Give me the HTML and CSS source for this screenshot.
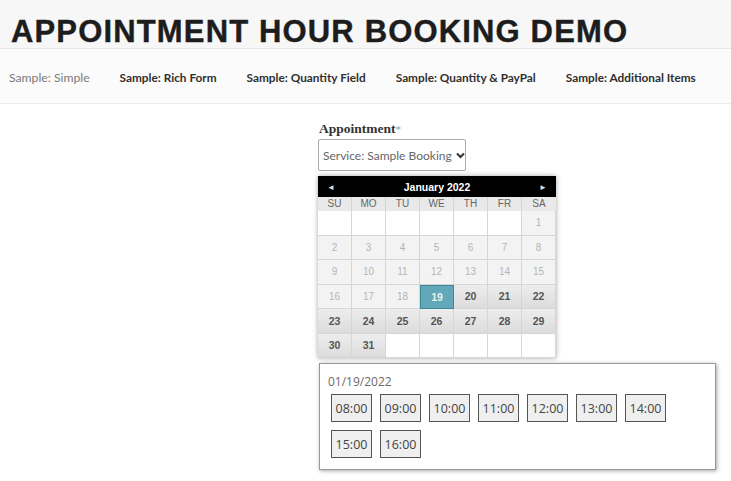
FILE: index.html
```html
<!DOCTYPE html>
<html>
<head>
<meta charset="utf-8">
<link rel="stylesheet" href="styles.css">
</head>
<body>
<header class="site-header">
  <h1 class="site-title">APPOINTMENT HOUR BOOKING DEMO</h1>
</header>
<nav class="main-nav">
  <a class="nav-link current">Sample: Simple</a>
  <a class="nav-link">Sample: Rich Form</a>
  <a class="nav-link">Sample: Quantity Field</a>
  <a class="nav-link">Sample: Quantity &amp; PayPal</a>
  <a class="nav-link">Sample: Additional Items</a>
</nav>
<main class="content">
  <div class="form">
    <label class="field-label">Appointment<span class="req">*</span></label>
    <div class="select">
      <span class="select-text">Service: Sample Booking</span>
      <svg class="chev" width="9" height="7" viewBox="0 0 9 7"><path d="M1 1.5 L4.5 5 L8 1.5" fill="none" stroke="#333" stroke-width="2"/></svg>
    </div>
    <div class="calendar">
      <div class="cal-head">
        <span class="arrow">&#9668;</span>
        <span class="month">January 2022</span>
        <span class="arrow">&#9658;</span>
      </div>
      <div class="cal-grid">
        <div class="dow">SU</div><div class="dow">MO</div><div class="dow">TU</div><div class="dow">WE</div><div class="dow">TH</div><div class="dow">FR</div><div class="dow">SA</div>
        <div class="day empty"></div><div class="day empty"></div><div class="day empty"></div><div class="day empty"></div><div class="day empty"></div><div class="day empty"></div><div class="day off">1</div>
        <div class="day off">2</div><div class="day off">3</div><div class="day off">4</div><div class="day off">5</div><div class="day off">6</div><div class="day off">7</div><div class="day off">8</div>
        <div class="day off">9</div><div class="day off">10</div><div class="day off">11</div><div class="day off">12</div><div class="day off">13</div><div class="day off">14</div><div class="day off">15</div>
        <div class="day off">16</div><div class="day off">17</div><div class="day off">18</div><div class="day sel">19</div><div class="day on">20</div><div class="day on">21</div><div class="day on">22</div>
        <div class="day on">23</div><div class="day on">24</div><div class="day on">25</div><div class="day on">26</div><div class="day on">27</div><div class="day on">28</div><div class="day on">29</div>
        <div class="day on">30</div><div class="day on">31</div><div class="day empty"></div><div class="day empty"></div><div class="day empty"></div><div class="day empty"></div><div class="day empty"></div>
      </div>
    </div>
    <div class="slots">
      <div class="slot-date">01/19/2022</div>
      <div class="slot-list">
        <span class="slot">08:00</span><span class="slot">09:00</span><span class="slot">10:00</span><span class="slot">11:00</span><span class="slot">12:00</span><span class="slot">13:00</span><span class="slot">14:00</span>
        <span class="slot">15:00</span><span class="slot">16:00</span>
      </div>
    </div>
  </div>
</main>
</body>
</html>
```
FILE: styles.css
```css
html, body { margin: 0; padding: 0; }
body {
  background: #ffffff;
  font-family: "Lato", "Liberation Sans", sans-serif;
  color: #333;
  width: 731px;
  height: 481px;
  overflow: hidden;
}
.site-header {
  background: #f7f7f7;
  height: 49px;
  border-bottom: 1px solid #e6e6e6;
  box-sizing: border-box;
  padding-left: 11px;
  overflow: hidden;
}
.site-title {
  margin: 0;
  font-family: "Liberation Sans", Arial, sans-serif;
  font-weight: 900;
  font-size: 31px;
  letter-spacing: 1.15px;
  color: #1d1d1d;
  line-height: 63px;
  -webkit-text-stroke: 0.4px #1d1d1d;
}
.main-nav {
  display: flex;
  align-items: center;
  height: 54px;
  background: #fbfbfb;
  border-bottom: 1px solid #ececec;
  padding-left: 9px;
  gap: 30px;
}
.nav-link {
  font-family: "Lato", sans-serif;
  font-size: 11.8px;
  font-weight: 700;
  color: #2f2f2f;
  padding-top: 2px;
  white-space: nowrap;
}
.nav-link.current { color: #7a7a7a; font-weight: 400; font-size: 12.2px; }
.content {
  padding: 17px 0 0 318px;
}
.form { display: flex; flex-direction: column; align-items: flex-start; }
.field-label {
  font-family: "Liberation Serif", serif;
  font-weight: 700;
  font-size: 13.5px;
  color: #333;
  margin-left: 1px;
  line-height: 16px;
}
.req { color: #7aa; font-weight: 400; font-size: 11px; vertical-align: top; }
.select {
  margin-top: 2px;
  width: 148px;
  height: 32px;
  box-sizing: border-box;
  border: 1px solid #aaa;
  border-radius: 2px;
  display: flex;
  align-items: center;
  padding: 0 4px 0 4px;
  gap: 4px;
}
.select-text { font-size: 12px; color: #666; white-space: nowrap; }
.chev { flex: none; margin-top: 1px; }
.calendar {
  margin-top: 5px;
  width: 238px;
  box-shadow: 0 0 5px rgba(0,0,0,0.35);
  background: #fff;
}
.cal-head {
  height: 21px;
  background: #000;
  color: #fff;
  display: flex;
  align-items: center;
  justify-content: space-between;
  padding: 0 9px 0 9px;
}
.arrow { font-size: 8px; color: #ddd; }
.month { font-family: "Liberation Sans", Arial, sans-serif; font-weight: 700; font-size: 10.5px; }
.cal-grid {
  display: grid;
  grid-template-columns: repeat(7, 34px);
  grid-auto-rows: 24.5px;
  grid-template-rows: 14px;
  font-family: "Liberation Sans", Arial, sans-serif;
}
.dow {
  background: #e9e9e9;
  color: #666;
  font-size: 10px;
  text-align: center;
  line-height: 14px;
  border-right: 1px solid #d5d5d5;
}
.dow:nth-child(7n) { border-right: none; }
.day {
  border-right: 1px solid #d6d6d6;
  border-bottom: 1px solid #d6d6d6;
  display: flex;
  align-items: center;
  justify-content: center;
  font-size: 10px;
  box-sizing: border-box;
}
.day.empty { background: #fff; }
.day.off { background: #f3f3f3; color: #b5b5b5; }
.day.on {
  background: linear-gradient(#ededed, #dcdcdc);
  color: #555;
  font-weight: 700;
  font-size: 10.5px;
}
.day.sel {
  background: #63a8b8;
  color: #e6f2f5;
  font-weight: 700;
  font-size: 10.5px;
  border: 1px solid #3e8797;
}
.slots {
  margin-top: 5px;
  margin-left: 1px;
  width: 397px;
  height: 107px;
  box-sizing: border-box;
  border: 1px solid #999;
  box-shadow: 1px 1px 4px rgba(0,0,0,0.35);
  background: #fff;
  padding: 11px 8px 0 8px;
  font-family: "Open Sans", "DejaVu Sans", sans-serif;
}
.slot-date { font-size: 12px; color: #6f6a66; line-height: 14px; }
.slot-list {
  display: flex;
  flex-wrap: wrap;
  gap: 8px 8px;
  margin-top: 5px;
  padding-left: 3px;
  width: 380px;
}
.slot {
  width: 41px;
  height: 28px;
  box-sizing: border-box;
  border: 1px solid #555;
  background: #efefef;
  color: #444;
  font-size: 12.5px;
  display: flex;
  align-items: center;
  justify-content: center;
}
```
